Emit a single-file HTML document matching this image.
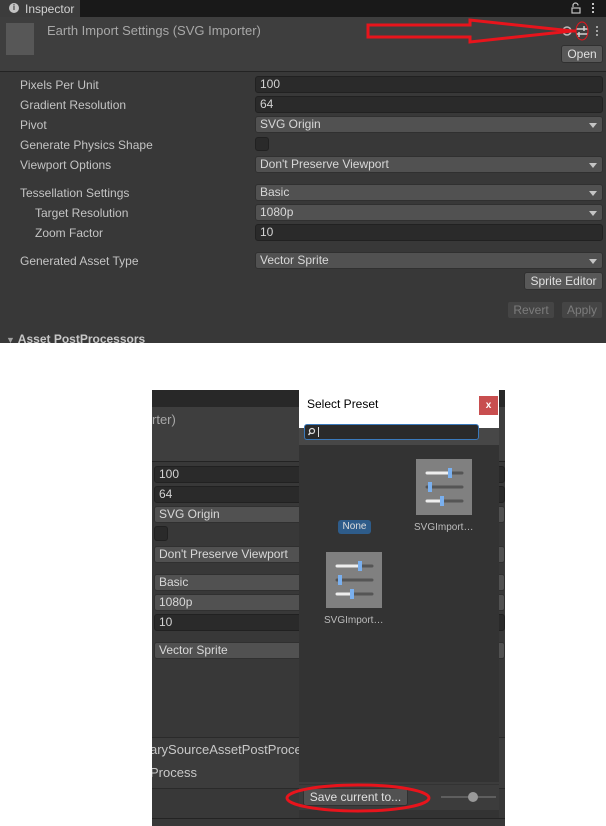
<!DOCTYPE html>
<html><head><style>
*{margin:0;padding:0;box-sizing:border-box}
body{width:606px;height:826px;background:#fff;position:relative;overflow:hidden;font-family:"Liberation Sans",sans-serif;font-size:12px;color:#c4c4c4}
.a{position:absolute}
.lbl{position:absolute;font-size:12px;color:#c4c4c4;line-height:16px;white-space:nowrap}
.fld{position:absolute;height:17px;border-radius:3px;background:#2a2a2a;border:1px solid #212121;color:#d2d2d2;padding-left:4px;line-height:15px;font-size:12px}
.dd{position:absolute;height:17px;border-radius:3px;background:#515151;border:1px solid #303030;color:#d8d8d8;padding-left:4px;line-height:15px;font-size:12px}
.dd:after{content:"";position:absolute;right:5px;top:6px;border-left:4px solid transparent;border-right:4px solid transparent;border-top:5px solid #c4c4c4}
.low .dd:after{display:none}
.btn{position:absolute;height:18px;border-radius:3px;background:#585858;border:1px solid #303030;color:#e0e0e0;text-align:center;line-height:16px;font-size:12px}
</style></head><body>
<!-- TOP PANEL -->
<div class="a" style="left:0;top:0;width:606px;height:343px;background:#383838"></div>
<div class="a" style="left:0;top:0;width:606px;height:17px;background:#191919"></div>
<div class="a" style="left:0;top:0;width:80px;height:17px;background:#3c3c3c"></div>
<div class="a" style="left:9px;top:3px;width:10px;height:10px;border-radius:50%;background:#c4c4c4;color:#3c3c3c;font-size:8px;font-weight:bold;text-align:center;line-height:10px">i</div>
<div class="lbl" style="left:25px;top:1px;color:#d2d2d2">Inspector</div>
<svg class="a" style="left:570px;top:2px" width="12" height="12"><path d="M3 5V3.5a2.5 2.5 0 0 1 5 0" fill="none" stroke="#c4c4c4" stroke-width="1.2"/><rect x="2" y="6" width="8" height="5" fill="none" stroke="#c4c4c4" stroke-width="1.2"/></svg>
<div class="a" style="left:592px;top:3px;width:2px;height:2px;background:#c4c4c4;box-shadow:0 4px #c4c4c4,0 8px #c4c4c4"></div>
<div class="a" style="left:0;top:17px;width:606px;height:54px;background:#3e3e3e"></div>
<div class="a" style="left:0;top:71px;width:606px;height:1px;background:#232323"></div>
<div class="a" style="left:6px;top:23px;width:28px;height:32px;background:#575757"></div>
<div class="lbl" style="left:47px;top:23px;font-size:13px;color:#a8a8a8">Earth Import Settings (SVG Importer)</div>
<svg class="a" style="left:360px;top:17px" width="246" height="30">
<circle cx="207" cy="14" r="4" fill="none" stroke="#bbb" stroke-width="1.5"/>
<path d="M8 8 L110 8 L110 3 L212 14 L110 25 L110 20 L8 20 Z" fill="none" stroke="#e8141c" stroke-width="3"/>
<path d="M212 14 L216 14" stroke="#e8141c" stroke-width="3"/>
<path d="M216 12h12M216 17h12M224 9v5M219 15v5" stroke="#d0d0d0" stroke-width="1.5"/>
<ellipse cx="222" cy="14" rx="6" ry="9" fill="none" stroke="#e8141c" stroke-width="1"/>
<circle cx="237" cy="10" r="1" fill="#c4c4c4"/><circle cx="237" cy="14" r="1" fill="#c4c4c4"/><circle cx="237" cy="18" r="1" fill="#c4c4c4"/>
</svg>
<div class="btn" style="left:561px;top:45px;width:42px">Open</div>
<div class="lbl" style="left:20px;top:77px">Pixels Per Unit</div><div class="fld" style="left:255px;top:76px;width:348px">100</div>
<div class="lbl" style="left:20px;top:97px">Gradient Resolution</div><div class="fld" style="left:255px;top:96px;width:348px">64</div>
<div class="lbl" style="left:20px;top:117px">Pivot</div><div class="dd" style="left:255px;top:116px;width:348px">SVG Origin</div>
<div class="lbl" style="left:20px;top:137px">Generate Physics Shape</div><div class="fld" style="left:255px;top:137px;width:14px;height:14px;padding:0"></div>
<div class="lbl" style="left:20px;top:157px">Viewport Options</div><div class="dd" style="left:255px;top:156px;width:348px">Don't Preserve Viewport</div>
<div class="lbl" style="left:20px;top:185px">Tessellation Settings</div><div class="dd" style="left:255px;top:184px;width:348px">Basic</div>
<div class="lbl" style="left:35px;top:205px">Target Resolution</div><div class="dd" style="left:255px;top:204px;width:348px">1080p</div>
<div class="lbl" style="left:35px;top:225px">Zoom Factor</div><div class="fld" style="left:255px;top:224px;width:348px">10</div>
<div class="lbl" style="left:20px;top:253px">Generated Asset Type</div><div class="dd" style="left:255px;top:252px;width:348px">Vector Sprite</div>
<div class="btn" style="left:524px;top:272px;width:79px">Sprite Editor</div>
<div class="btn" style="left:507px;top:301px;width:48px;background:#454545;color:#7c7c7c;border-color:#383838">Revert</div>
<div class="btn" style="left:561px;top:301px;width:42px;background:#454545;color:#7c7c7c;border-color:#383838">Apply</div>
<div class="lbl" style="left:6px;top:331px;font-weight:bold;color:#c8c8c8"><span style="font-size:9px;color:#a0a0a0">&#9660;</span> Asset PostProcessors</div>

<!-- LOWER IMAGE -->
<div class="a low" style="left:152px;top:390px;width:353px;height:436px;background:#383838;overflow:hidden">
<div class="a" style="left:0;top:0;width:353px;height:17px;background:#282828"></div>
<div class="a" style="left:0;top:17px;width:353px;height:54px;background:#3e3e3e"></div>
<div class="a" style="left:0;top:71px;width:353px;height:1px;background:#232323"></div>
<div class="lbl" style="left:0;top:22px;font-size:13px;color:#a8a8a8">rter)</div>
<div class="fld" style="left:2px;top:76px;width:351px">100</div>
<div class="fld" style="left:2px;top:96px;width:351px">64</div>
<div class="dd" style="left:2px;top:116px;width:351px">SVG Origin</div>
<div class="fld" style="left:2px;top:136px;width:14px;height:15px;padding:0"></div>
<div class="dd" style="left:2px;top:156px;width:351px">Don't Preserve Viewport</div>
<div class="dd" style="left:2px;top:184px;width:351px">Basic</div>
<div class="dd" style="left:2px;top:204px;width:351px">1080p</div>
<div class="fld" style="left:2px;top:224px;width:351px">10</div>
<div class="dd" style="left:2px;top:252px;width:351px">Vector Sprite</div>
<div class="a" style="left:0;top:347px;width:353px;height:52px;background:#3c3c3c;border-top:1px solid #2a2a2a;border-bottom:1px solid #2a2a2a"></div>
<div class="lbl" style="left:-2px;top:352px;font-size:13px;color:#c8c8c8">arySourceAssetPostProcess</div>
<div class="lbl" style="left:-2px;top:375px;font-size:13px;color:#c8c8c8">Process</div>
<div class="a" style="left:0;top:428px;width:353px;height:1px;background:#232323"></div>
</div>
<!-- popup -->
<div class="a" style="left:299px;top:390px;width:200px;height:428px;background:#333"></div>
<div class="a" style="left:299px;top:390px;width:200px;height:38px;background:#fff"></div>
<div class="lbl" style="left:307px;top:396px;color:#000;font-size:12px">Select Preset</div>
<div class="a" style="left:479px;top:396px;width:19px;height:19px;background:#c84e4f;color:#fff;font-size:10px;font-weight:bold;text-align:center;line-height:19px">x</div>
<div class="a" style="left:299px;top:428px;width:200px;height:17px;background:#474747"></div>
<div class="a" style="left:304px;top:424px;width:175px;height:16px;background:#2a2a2a;border:1px solid #3a79bb;border-radius:3px"></div>
<svg class="a" style="left:307px;top:427px" width="10" height="10"><circle cx="5" cy="4" r="2.5" fill="none" stroke="#ddd" stroke-width="1.2"/><path d="M3.5 5.5L1.5 8" stroke="#ddd" stroke-width="1.5"/></svg>
<div class="a" style="left:318px;top:427px;width:1px;height:10px;background:#ddd"></div>
<div class="a" style="left:338px;top:520px;width:33px;height:14px;background:#2e5c8a;border-radius:3px;color:#ddd;font-size:10px;text-align:center;line-height:14px">None</div>
<svg class="a" style="left:416px;top:459px" width="56" height="56"><rect width="56" height="56" fill="#808080"/>
<g stroke-linecap="round" stroke-width="3"><path d="M11 14H46M11 28H46M11 42H46" stroke="#555"/><path d="M11 14H34M11 42H26" stroke="#eee"/></g>
<rect x="32" y="9" width="4" height="10" fill="#7ab0ef"/><rect x="12" y="23" width="4" height="10" fill="#7ab0ef"/><rect x="24" y="37" width="4" height="10" fill="#7ab0ef"/></svg>
<div class="lbl" style="left:414px;top:520px;font-size:10px;color:#bbb">SVGImport…</div>
<svg class="a" style="left:326px;top:552px" width="56" height="56"><rect width="56" height="56" fill="#808080"/>
<g stroke-linecap="round" stroke-width="3"><path d="M11 14H46M11 28H46M11 42H46" stroke="#555"/><path d="M11 14H34M11 42H26" stroke="#eee"/></g>
<rect x="32" y="9" width="4" height="10" fill="#7ab0ef"/><rect x="12" y="23" width="4" height="10" fill="#7ab0ef"/><rect x="24" y="37" width="4" height="10" fill="#7ab0ef"/></svg>
<div class="lbl" style="left:324px;top:613px;font-size:10px;color:#bbb">SVGImport…</div>
<div class="a" style="left:299px;top:782px;width:200px;height:2px;background:#3c3c3c"></div>
<div class="a" style="left:299px;top:785px;width:200px;height:25px;background:#3c3c3c"></div>
<div class="btn" style="left:303px;top:788px;width:105px;height:18px;background:#515151;font-size:12px">Save current to...</div>
<div class="a" style="left:441px;top:796px;width:55px;height:2px;background:#5e5e5e"></div>
<div class="a" style="left:468px;top:792px;width:10px;height:10px;border-radius:50%;background:#999"></div>
<svg class="a" style="left:284px;top:782px" width="152" height="34"><ellipse cx="74" cy="16" rx="71" ry="13" fill="none" stroke="#e8141c" stroke-width="3"/></svg>
</body></html>
